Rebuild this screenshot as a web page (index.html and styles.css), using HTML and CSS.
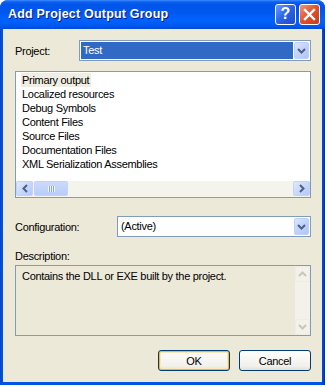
FILE: index.html
```html
<!DOCTYPE html>
<html lang="en">
<head>
    <meta charset="UTF-8">
    <title>Add Project Output Group</title>
    <link rel="stylesheet" href="styles.css">
</head>
<body>
    <div class="window">
        <div class="titlebar">
            <span class="title">Add Project Output Group</span>
            <div class="caption-btns">
                <span class="cap-btn help">?</span>
                <span class="cap-btn close">
                    <svg width="13" height="13" viewBox="0 0 13 13"><path d="M2 2 L11 11 M11 2 L2 11" stroke="#fff" stroke-width="2.4" stroke-linecap="square"/></svg>
                </span>
            </div>
        </div>

        <div class="client">
            <div class="field-row project-row">
                <label class="field-label project-label">Project:</label>
                <div class="combo">
                    <span class="combo-value selected">Test</span>
                    <span class="drop-btn">
                        <svg width="9" height="6" viewBox="0 0 9 6"><path d="M1 1 L4.5 4.5 L8 1" fill="none" stroke="#4d6185" stroke-width="2"/></svg>
                    </span>
                </div>
            </div>

            <div class="listbox">
                <ul class="items">
                    <li class="focused">Primary output</li>
                    <li>Localized resources</li>
                    <li>Debug Symbols</li>
                    <li>Content Files</li>
                    <li>Source Files</li>
                    <li>Documentation Files</li>
                    <li>XML Serialization Assemblies</li>
                </ul>
                <div class="hscroll">
                    <span class="sb-btn">
                        <svg width="6" height="9" viewBox="0 0 6 9"><path d="M5 1 L1.5 4.5 L5 8" fill="none" stroke="#4d6185" stroke-width="2"/></svg>
                    </span>
                    <span class="sb-thumb"><span class="grip"></span></span>
                    <span class="sb-track"></span>
                    <span class="sb-btn">
                        <svg width="6" height="9" viewBox="0 0 6 9"><path d="M1 1 L4.5 4.5 L1 8" fill="none" stroke="#4d6185" stroke-width="2"/></svg>
                    </span>
                </div>
            </div>

            <div class="field-row config-row">
                <label class="field-label config-label">Configuration:</label>
                <div class="combo">
                    <span class="combo-value">(Active)</span>
                    <span class="drop-btn">
                        <svg width="9" height="6" viewBox="0 0 9 6"><path d="M1 1 L4.5 4.5 L8 1" fill="none" stroke="#4d6185" stroke-width="2"/></svg>
                    </span>
                </div>
            </div>

            <div class="desc-label">Description:</div>
            <div class="desc-box">
                <p class="desc-text">Contains the DLL or EXE built by the project.</p>
                <div class="vscroll">
                    <span class="sb-btn disabled">
                        <svg width="9" height="6" viewBox="0 0 9 6"><path d="M1 5 L4.5 1.5 L8 5" fill="none" stroke="#c9c7ba" stroke-width="2"/></svg>
                    </span>
                    <span class="sb-track"></span>
                    <span class="sb-btn disabled">
                        <svg width="9" height="6" viewBox="0 0 9 6"><path d="M1 1 L4.5 4.5 L8 1" fill="none" stroke="#c9c7ba" stroke-width="2"/></svg>
                    </span>
                </div>
            </div>

            <div class="buttons">
                <button class="btn default">OK</button>
                <button class="btn">Cancel</button>
            </div>
        </div>
    </div>
</body>
</html>
```

FILE: styles.css
```css
body {
    margin: 0;
    background-color: #fff;
    font-family: 'Liberation Sans', Arial, sans-serif;
    font-size: 11px;
    letter-spacing: -0.3px;
    color: #000;
}

.window {
    width: 325px;
    height: 385px;
    box-sizing: border-box;
    background: linear-gradient(90deg, #0042c9 0, #0055e5 2px, #0055e5 321px, #0031b8 325px);
    border-radius: 8px 8px 0 0;
    display: flex;
    flex-direction: column;
    overflow: hidden;
}

.titlebar {
    height: 29px;
    flex: none;
    display: flex;
    align-items: center;
    justify-content: space-between;
    padding: 0 5px 0 8px;
    background: linear-gradient(#3d8cff 0, #0a5ff0 2px, #0054e8 5px, #0058ee 12px, #0063ff 20px, #0058ee 26px, #0049d8 29px);
}

.title {
    color: #fff;
    font-weight: bold;
    font-size: 12.5px;
    letter-spacing: 0.2px;
    text-shadow: 1px 1px 0 #0a1883;
    padding-bottom: 1px;
}

.caption-btns {
    display: flex;
    gap: 3px;
    padding-bottom: 1px;
}

.cap-btn {
    width: 19px;
    height: 19px;
    border: 1px solid #fff;
    border-radius: 3px;
    display: flex;
    align-items: center;
    justify-content: center;
    color: #fff;
    font-weight: bold;
    font-size: 16px;
    letter-spacing: 0;
}

.help {
    background: linear-gradient(135deg, #6a9cfa 0, #2a62e6 50%, #1c4bd0 100%);
}

.close {
    background: linear-gradient(135deg, #f59277 0, #e0512b 50%, #c9391b 100%);
}

.client {
    flex: 1;
    margin: 0 3px 3px 3px;
    background-color: #ece9d8;
    padding: 11px 11px 0 12px;
}

.field-row {
    display: flex;
    align-items: center;
    height: 21px;
}

.project-label {
    width: 64px;
}

.config-row {
    margin-top: 18px;
}

.config-label {
    width: 102px;
}

.combo {
    flex: 1;
    height: 21px;
    box-sizing: border-box;
    border: 1px solid #7f9db9;
    background-color: #fff;
    display: flex;
    align-items: center;
    padding: 1px;
}

.combo-value {
    flex: 1;
    height: 17px;
    line-height: 17px;
    padding-left: 2px;
}

.combo-value.selected {
    background-color: #316ac5;
    color: #fff;
    margin-right: 1px;
}

.drop-btn {
    width: 15px;
    height: 17px;
    box-sizing: border-box;
    border: 1px solid #bcd0f8;
    border-radius: 2px;
    background: linear-gradient(135deg, #dce6fc 0, #c1d3fb 50%, #b0c6f7 100%);
    display: flex;
    align-items: center;
    justify-content: center;
}

.listbox {
    margin-top: 10px;
    height: 127px;
    box-sizing: border-box;
    border: 1px solid #7f9db9;
    background-color: #fff;
    display: flex;
    flex-direction: column;
}

.items {
    list-style: none;
    margin: 0;
    padding: 1px 0 0 5px;
    flex: 1;
}

.items li {
    height: 14px;
    line-height: 14px;
    padding-left: 1px;
    align-self: flex-start;
}

.items li.focused {
    display: inline-block;
    background-color: #f0eee2;
    padding-right: 2px;
}

.hscroll {
    height: 15px;
    display: flex;
    background-color: #f4f3ec;
    padding-bottom: 1px;
}

.sb-btn {
    width: 17px;
    height: 15px;
    box-sizing: border-box;
    border: 1px solid #c3d3f7;
    border-radius: 2px;
    background: linear-gradient(135deg, #e0e9fd 0, #c4d5fb 60%, #b4c8f6 100%);
    display: flex;
    align-items: center;
    justify-content: center;
}

.sb-thumb {
    width: 34px;
    margin-left: 1px;
    box-sizing: border-box;
    border: 1px solid #c3d3f7;
    border-radius: 2px;
    background: linear-gradient(#cbdafc, #b9cdf8);
    display: flex;
    align-items: center;
    justify-content: center;
}

.grip {
    width: 7px;
    height: 6px;
    background: repeating-linear-gradient(90deg, #eef3fe 0, #eef3fe 1px, #8aa6e6 1px, #8aa6e6 2px);
}

.sb-track {
    flex: 1;
}

.desc-label {
    margin-top: 10px;
    height: 18px;
    line-height: 18px;
}

.desc-box {
    height: 71px;
    box-sizing: border-box;
    border: 1px solid #7f9db9;
    background-color: #ece9d8;
    display: flex;
}

.desc-text {
    flex: 1;
    margin: 0;
    padding: 3px 0 0 6px;
    line-height: 14px;
}

.vscroll {
    width: 15px;
    display: flex;
    flex-direction: column;
    background-color: #f3f1ea;
}

.vscroll .sb-btn {
    width: 15px;
    height: 16px;
}

.sb-btn.disabled {
    border-color: #eeede5;
    background: #f2f1ea;
}

.buttons {
    display: flex;
    justify-content: flex-end;
    gap: 9px;
    margin-top: 14px;
}

.btn {
    width: 72px;
    height: 21px;
    box-sizing: border-box;
    border: 1px solid #003c74;
    border-radius: 3px;
    background: linear-gradient(#fefefd, #f1f0ea 80%, #e3e1d6);
    font-family: 'Liberation Sans', Arial, sans-serif;
    font-size: 11px;
    letter-spacing: -0.3px;
    color: #000;
    padding: 0;
}

.btn.default {
    box-shadow: inset 0 0 0 1px #f8b330, inset 0 0 0 2px #fce7b6;
}
```
